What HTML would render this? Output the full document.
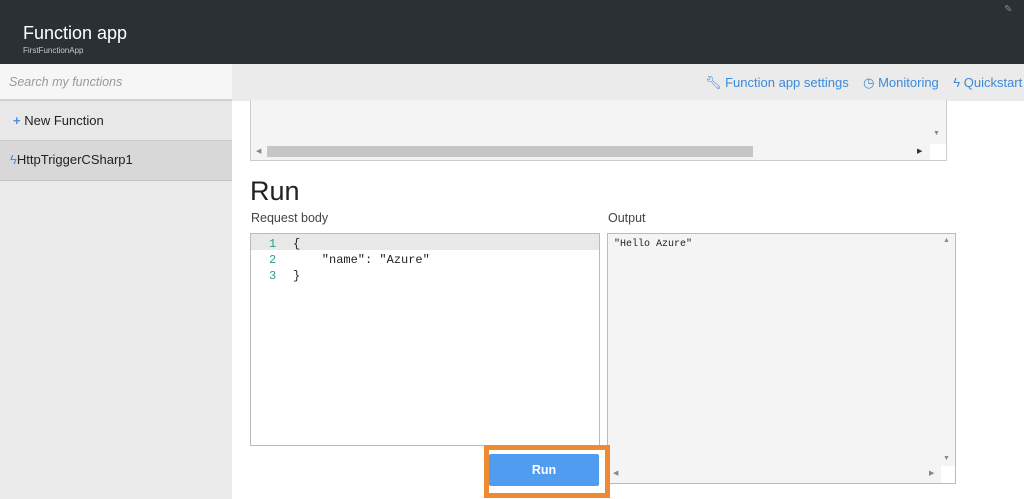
<!DOCTYPE html><html><head><style>
body{margin:0;width:1024px;height:499px;overflow:hidden;font-family:"Liberation Sans",sans-serif;background:#fff;position:relative}
div{position:absolute;box-sizing:border-box}
.mono{font-family:"Liberation Mono",monospace;font-size:12px}
.ar{color:#888;font-size:7px}
</style></head><body>
<div style="left:0;top:0;width:1024px;height:64px;background:#2b3035"></div>
<div style="left:23px;top:23px;color:#fff;font-size:18px">Function app</div>
<div style="left:23px;top:46px;color:#c8c8c8;font-size:8px">FirstFunctionApp</div>
<div style="left:1004px;top:4px;width:10px;height:10px;color:#888;font-size:10px">✎</div>
<div style="left:0;top:64px;width:232px;height:435px;background:#ebebeb"></div>
<div style="left:0;top:64px;width:232px;height:37px;background:#f6f6f6;border-bottom:2px solid #d0d0d0;color:#999;font-style:italic;font-size:12.5px;padding:11px 9px">Search my functions</div>
<div style="left:0;top:101px;width:232px;height:40px;background:#e8e8e8;border-bottom:1px solid #ccc;font-size:13px;padding:12px 13px;color:#222"><span style="color:#4a90d9;font-weight:bold">+</span> New Function</div>
<div style="left:0;top:141px;width:232px;height:40px;background:#d8d8d8;border-bottom:1px solid #c4c4c4;font-size:13px;padding:11px 10px;color:#222"><span style="color:#4a90d9">ϟ</span>HttpTriggerCSharp1</div>
<div style="left:232px;top:64px;width:792px;height:37px;background:#ebebeb"></div>
<div style="left:705px;top:75px;color:#3c8ad8;font-size:13px;white-space:nowrap">🔧︎ Function app settings &nbsp;&nbsp; ◷ Monitoring &nbsp;&nbsp; ϟ Quickstart</div>
<div style="left:250px;top:100px;width:697px;height:61px;background:#f4f4f4;border:1px solid #ccc;border-top:none"></div>
<div style="left:267px;top:146px;width:486px;height:11px;background:#c6c6c6"></div>
<div class="ar" style="left:256px;top:147px">◀</div>
<div class="ar" style="left:917px;top:147px;color:#333">▶</div>
<div class="ar" style="left:933px;top:130px">▼</div>
<div style="left:930px;top:144px;width:16px;height:16px;background:#fff"></div>
<div style="left:250px;top:176px;font-size:27px;color:#222">Run</div>
<div style="left:251px;top:211px;font-size:12.5px;color:#444">Request body</div>
<div style="left:608px;top:211px;font-size:12.5px;color:#444">Output</div>
<div style="left:250px;top:233px;width:350px;height:213px;border:1px solid #bbb;background:#fff"></div>
<div style="left:251px;top:234px;width:348px;height:16px;background:#e8e8e8"></div>
<div class="mono" style="left:269px;top:236px;color:#2a9d8f;line-height:16px">1<br>2<br>3</div>
<div class="mono" style="left:293px;top:236px;color:#222;line-height:16px;white-space:pre">{
    "name": "Azure"
}</div>
<div style="left:607px;top:233px;width:349px;height:251px;border:1px solid #bbb;background:#f4f4f4"></div>
<div class="mono" style="left:614px;top:239px;font-size:10px;color:#222">"Hello Azure"</div>
<div class="ar" style="left:943px;top:237px">▲</div>
<div class="ar" style="left:943px;top:455px">▼</div>
<div class="ar" style="left:613px;top:469px">◀</div>
<div class="ar" style="left:929px;top:469px">▶</div>
<div style="left:941px;top:466px;width:14px;height:17px;background:#fff"></div>
<div style="left:484px;top:445px;width:126px;height:53px;border:5px solid #f08a30"></div>
<div style="left:489px;top:454px;width:110px;height:32px;background:#4f9cf0;border-radius:2px;color:#fff;font-weight:bold;font-size:12.5px;text-align:center;line-height:32px">Run</div>
</body></html>
